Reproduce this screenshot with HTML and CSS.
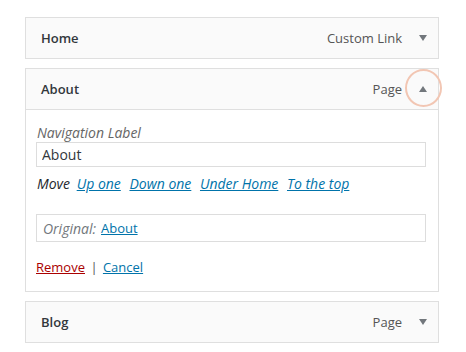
FILE: index.html
```html
<!DOCTYPE html>
<html lang="en">
<head>
    <meta charset="UTF-8">
    <title>Menu Items</title>
    <link rel="stylesheet" href="styles.css">
</head>
<body>

    <div class="menu">
        <!-- Home -->
        <div class="menu-item">
            <div class="item-handle">
                <span class="item-title">Home</span>
                <span class="item-controls">
                    <span class="item-type">Custom Link</span>
                    <span class="item-arrow down"></span>
                </span>
            </div>
        </div>

        <!-- About (açık) -->
        <div class="menu-item open">
            <div class="item-handle">
                <span class="item-title">About</span>
                <span class="item-controls">
                    <span class="item-type">Page</span>
                    <span class="item-arrow up"></span>
                    <span class="focus-ring"></span>
                </span>
            </div>
            <div class="item-settings">
                <label class="field-label">Navigation Label</label>
                <input class="field-input" type="text" value="About">

                <div class="move-line">
                    <span class="move-title">Move</span>
                    <a href="#">Up one</a>
                    <a href="#">Down one</a>
                    <a href="#">Under Home</a>
                    <a href="#">To the top</a>
                </div>

                <div class="original">
                    <span class="original-label">Original:</span>
                    <a href="#">About</a>
                </div>

                <div class="actions">
                    <a href="#" class="remove">Remove</a>
                    <span class="sep">|</span>
                    <a href="#" class="cancel">Cancel</a>
                </div>
            </div>
        </div>

        <!-- Blog -->
        <div class="menu-item">
            <div class="item-handle">
                <span class="item-title">Blog</span>
                <span class="item-controls">
                    <span class="item-type">Page</span>
                    <span class="item-arrow down"></span>
                </span>
            </div>
        </div>
    </div>

</body>
</html>
```

FILE: styles.css
```css
body {
    margin: 0;
    font-family: 'Open Sans', sans-serif;
    font-size: 13px;
    color: #23282d;
    background: #fff;
}

.menu {
    width: 414px;
    padding: 17px 0 0 25px;
    display: flex;
    flex-direction: column;
    gap: 9px;
}

.item-handle {
    display: flex;
    justify-content: space-between;
    align-items: center;
    height: 40px;
    padding: 0 11px 0 15px;
    background: #fafafa;
    border: 1px solid #dfdfdf;
}

.item-title {
    font-weight: 600;
    color: #32373c;
}

.item-controls {
    position: relative;
    display: flex;
    align-items: center;
}

.item-type {
    color: #555;
    margin-right: 17px;
}

.item-arrow {
    width: 0;
    height: 0;
    border-left: 4px solid transparent;
    border-right: 4px solid transparent;
}

.item-arrow.down {
    border-top: 6px solid #72777c;
}

.item-arrow.up {
    border-bottom: 6px solid #72777c;
}

/* Ok etrafındaki halka */
.focus-ring {
    position: absolute;
    right: -15px;
    top: 50%;
    width: 33px;
    height: 34px;
    margin-top: -20px;
    border: 2.5px solid #f2c6b3;
    border-radius: 50%;
}

.item-settings {
    border: 1px solid #dfdfdf;
    border-top: none;
    padding: 14px 12px 15px 10px;
    display: flex;
    flex-direction: column;
}

.field-label {
    font-style: italic;
    font-size: 14px;
    color: #666;
    line-height: 18px;
    padding-left: 1px;
}

.field-input {
    box-sizing: border-box;
    height: 25px;
    margin: 0;
    padding: 0 5px;
    border: 1px solid #dddddd;
    font-family: 'Open Sans', sans-serif;
    font-size: 14px;
    color: #32373c;
    outline: none;
}

.move-line {
    margin-top: 8px;
    line-height: 18px;
    font-style: italic;
    font-size: 14px;
    padding-left: 1px;
}

.move-line .move-title {
    margin-right: 3px;
}

.move-line a {
    margin-right: 5px;
}

a {
    color: #0073aa;
    text-decoration: underline;
}

.original {
    box-sizing: border-box;
    margin-top: 21px;
    height: 28px;
    display: flex;
    align-items: center;
    padding: 0 6px;
    border: 1px solid #dddddd;
}

.original-label {
    font-style: italic;
    font-size: 14px;
    color: #72777c;
    margin-right: 5px;
}

.actions {
    margin-top: 16px;
    line-height: 18px;
}

.actions .remove {
    color: #a00;
}

.actions .sep {
    color: #555;
    margin: 0 2px;
}
```
